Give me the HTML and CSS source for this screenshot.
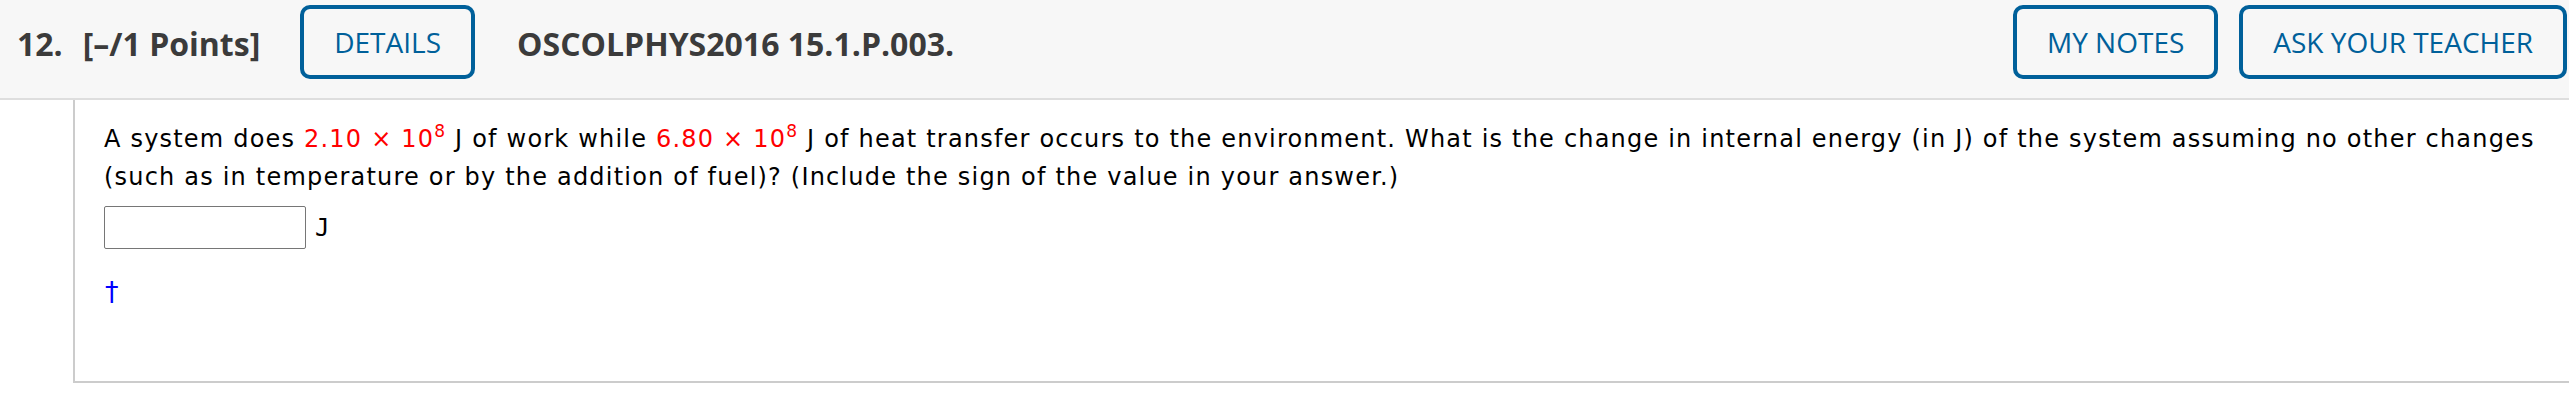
FILE: index.html
```html
<!DOCTYPE html>
<html>
<head>
<meta charset="utf-8">
<link rel="stylesheet" href="styles.css">
</head>
<body>
<div class="qhead">
  <span class="qnum">12.</span>
  <span class="qpts">[–/1 Points]</span>
  <button class="btn btn-details">DETAILS</button>
  <span class="qtitle">OSCOLPHYS2016 15.1.P.003.</span>
  <div class="qactions">
    <button class="btn">MY NOTES</button>
    <button class="btn">ASK YOUR TEACHER</button>
  </div>
</div>
<div class="qbody">
  <p class="qtext">A system does <span class="val">2.10 × 10<sup>8</sup></span> J of work while <span class="val">6.80 × 10<sup>8</sup></span> J of heat transfer occurs to the environment. What is the change in internal energy (in J) of the system assuming no other changes (such as in temperature or by the addition of fuel)? (Include the sign of the value in your answer.)</p>
  <div class="answer">
    <input class="ans-input" type="text">
    <span class="unit">J</span>
  </div>
  <div class="dagger">†</div>
</div>
</body>
</html>
```
FILE: styles.css
```css
html, body {
  margin: 0;
  padding: 0;
  background: #ffffff;
}

.qhead {
  display: flex;
  align-items: center;
  height: 84px;
  padding: 0 2px 14px 17px;
  background: #f7f7f7;
  border-bottom: 2px solid #dedede;
  font-family: "Open Sans", sans-serif;
  color: #3b3b3b;
}

.qnum, .qpts, .qtitle {
  font-weight: 700;
  font-size: 32px;
  line-height: 1;
  padding-top: 4px;
}

.qpts {
  margin-left: 20px;
}

.btn {
  font-family: "Open Sans", sans-serif;
  font-size: 28px;
  line-height: 1;
  color: #00609a;
  background: transparent;
  border: 4px solid #00609a;
  border-radius: 10px;
  height: 74px;
  padding: 0 30px;
  margin: 0;
  box-sizing: border-box;
}

.btn-details {
  margin-left: 40px;
}

.qtitle {
  margin-left: 42px;
}

.qactions {
  margin-left: auto;
  display: flex;
  gap: 21px;
}

.qbody {
  margin-left: 73px;
  border-left: 2px solid #cccccc;
  border-bottom: 2px solid #cccccc;
  padding-left: 29px;
  padding-top: 20px;
  box-sizing: border-box;
  height: 283px;
  font-family: "DejaVu Sans", Verdana, sans-serif;
  font-size: 24px;
  letter-spacing: 1.2px;
  color: #000;
}

.qtext {
  margin: 0;
  line-height: 38px;
}

.val {
  color: #ff0000;
}

sup {
  font-size: 17px;
  line-height: 0;
  vertical-align: 10px;
}

.answer {
  display: flex;
  align-items: center;
  margin-top: 10px;
}

.ans-input {
  width: 202px;
  height: 43px;
  box-sizing: border-box;
  border: 1px solid #767676;
  border-radius: 2px;
  margin: 0;
  padding: 0;
  background: #fff;
}

.unit {
  margin-left: 9px;
  font-family: "DejaVu Sans Mono", monospace;
  letter-spacing: 0;
}

.dagger {
  margin-top: 30px;
  margin-left: 1px;
  color: #0000ff;
  font-size: 27px;
  line-height: 26px;
}
```
